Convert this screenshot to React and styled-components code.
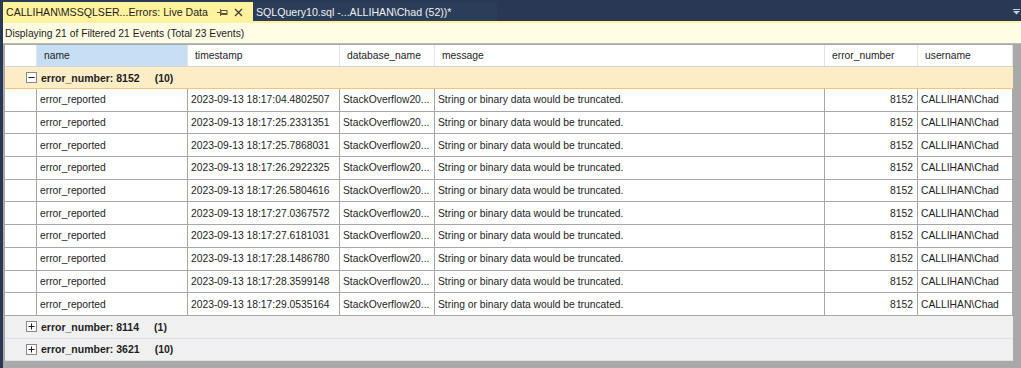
import React from "react";
import styled, { createGlobalStyle } from "styled-components";

const GlobalStyle = createGlobalStyle`
  html, body {
    margin: 0;
    padding: 0;
    background: #293955;
  }
  body {
    font-family: "Liberation Sans", Arial, sans-serif;
  }
`;

const COLUMNS = "32px 151px 152px 95px 390px 93px 95px";

const Window = styled.div`
  width: 1021px;
  height: 368px;
  background: #293955;
  padding-left: 3px;
  box-sizing: border-box;
  display: flex;
  flex-direction: column;
  overflow: hidden;
`;

const TabStrip = styled.div`
  height: 21px;
  display: flex;
  align-items: flex-end;
  position: relative;
`;

const Tab = styled.div`
  height: 19px;
  box-sizing: border-box;
  display: flex;
  align-items: center;
  gap: 6px;
  padding: 0 6px 0 3px;
  font-size: 10.6px;
  white-space: nowrap;
  color: ${(p) => (p.$active ? "#1e1e1e" : "#f1f1f1")};
  background: ${(p) => (p.$active ? "#fff29d" : "#2c3d5a")};
  width: ${(p) => p.$width}px;
`;

const TabLabel = styled.span`
  flex: 1;
`;

const TabIcons = styled.span`
  display: flex;
  align-items: center;
  gap: 6px;
  padding: 1px 4px 0 0;
`;

const StripMenu = styled.svg`
  position: absolute;
  right: 1px;
  top: 9px;
`;

const TabRule = styled.div`
  height: 2px;
  background: #fff29d;
`;

const InfoBar = styled.div`
  height: 21px;
  box-sizing: border-box;
  background: #fffde3;
  border-bottom: 1px solid #b9b9b9;
  font-size: 10.3px;
  color: #1e1e1e;
  display: flex;
  align-items: center;
  padding-left: 2px;
`;

const GridFrame = styled.div`
  flex: 1;
  background: #a9a9a9;
  padding: 1px 0 0 2px;
`;

const Grid = styled.div`
  width: 1008px;
  font-size: 10.3px;
  color: #1e1e1e;
`;

const HeaderRow = styled.div`
  display: grid;
  grid-template-columns: ${COLUMNS};
  height: 22px;
  box-sizing: border-box;
  background: #ffffff;
  border-bottom: 1px solid #d4d4d4;
`;

const HeaderCell = styled.div`
  display: flex;
  align-items: center;
  padding-left: 7px;
  border-right: 1px solid #e3e3e3;
  background: ${(p) => (p.$selected ? "#c7dff4" : "#ffffff")};
`;

const GroupRow = styled.div`
  height: ${(p) => (p.$expanded ? 22 : 22.7)}px;
  box-sizing: border-box;
  display: flex;
  align-items: center;
  padding-left: 21px;
  gap: 4px;
  font-weight: bold;
  font-size: 10.5px;
  background: ${(p) => (p.$expanded ? "#fdedc6" : "#f0f0f0")};
  border-bottom: 1px solid ${(p) => (p.$expanded ? "#f2c76e" : "#dbe2ea")};
`;

const Count = styled.span`
  margin-left: 11px;
`;

const DataRow = styled.div`
  display: grid;
  grid-template-columns: ${COLUMNS};
  height: 22.7px;
  box-sizing: border-box;
  background: #ffffff;
  border-bottom: 1px solid #a8a8a8;
`;

const RowHeader = styled.div`
  border-right: 1px solid #a8a8a8;
`;

const Cell = styled.div`
  display: flex;
  align-items: center;
  justify-content: ${(p) => (p.$right ? "flex-end" : "flex-start")};
  padding: ${(p) => (p.$right ? "0 4px 0 0" : "0 0 0 3px")};
  border-right: 1px solid #a8a8a8;
  white-space: nowrap;
  overflow: hidden;
`;

const Toggle = ({ open }) => (
  <svg width="11" height="11" viewBox="0 0 11 11">
    <rect x="0.5" y="0.5" width="10" height="10" fill="#ffffff" stroke="#8a8a8a" />
    <line x1="2.5" y1="5.5" x2="8.5" y2="5.5" stroke="#1e1e1e" />
    {!open && <line x1="5.5" y1="2.5" x2="5.5" y2="8.5" stroke="#1e1e1e" />}
  </svg>
);

const PinIcon = () => (
  <svg width="11" height="9" viewBox="0 0 11 9">
    <line x1="0" y1="4.5" x2="3" y2="4.5" stroke="#5b5a3e" />
    <line x1="3.5" y1="1" x2="3.5" y2="8" stroke="#5b5a3e" />
    <rect x="4" y="2.5" width="6" height="4" fill="none" stroke="#5b5a3e" />
    <line x1="4" y1="5.5" x2="10" y2="5.5" stroke="#5b5a3e" />
  </svg>
);

const CloseIcon = () => (
  <svg width="9" height="9" viewBox="0 0 9 9">
    <path d="M1 1 L8 8 M8 1 L1 8" stroke="#3b3b3b" strokeWidth="1.3" />
  </svg>
);

const times = [
  "04.4802507",
  "25.2331351",
  "25.7868031",
  "26.2922325",
  "26.5804616",
  "27.0367572",
  "27.6181031",
  "28.1486780",
  "28.3599148",
  "29.0535164",
];

const headers = ["", "name", "timestamp", "database_name", "message", "error_number", "username"];

export default function App() {
  return (
    <>
      <GlobalStyle />
      <Window>
        <TabStrip>
          <Tab $active $width={250}>
            <TabLabel>CALLIHAN\MSSQLSER...Errors: Live Data</TabLabel>
            <TabIcons>
              <PinIcon />
              <CloseIcon />
            </TabIcons>
          </Tab>
          <Tab $width={244}>
            <TabLabel>SQLQuery10.sql -...ALLIHAN\Chad (52))*</TabLabel>
          </Tab>
          <StripMenu width="7" height="6" viewBox="0 0 7 6">
            <rect x="0" y="0" width="7" height="1" fill="#c5cedb" />
            <path d="M0 2 L7 2 L3.5 5.5 Z" fill="#c5cedb" />
          </StripMenu>
        </TabStrip>
        <TabRule />
        <InfoBar>Displaying 21 of Filtered 21 Events (Total 23 Events)</InfoBar>
        <GridFrame>
          <Grid>
            <HeaderRow>
              {headers.map((h, i) => (
                <HeaderCell key={i} $selected={h === "name"}>
                  {h}
                </HeaderCell>
              ))}
            </HeaderRow>
            <GroupRow $expanded>
              <Toggle open />
              <span>error_number: 8152</span>
              <Count>(10)</Count>
            </GroupRow>
            {times.map((t) => (
              <DataRow key={t}>
                <RowHeader />
                <Cell>error_reported</Cell>
                <Cell>2023-09-13 18:17:{t}</Cell>
                <Cell>StackOverflow20...</Cell>
                <Cell>String or binary data would be truncated.</Cell>
                <Cell $right>8152</Cell>
                <Cell>CALLIHAN\Chad</Cell>
              </DataRow>
            ))}
            <GroupRow>
              <Toggle />
              <span>error_number: 8114</span>
              <Count>(1)</Count>
            </GroupRow>
            <GroupRow>
              <Toggle />
              <span>error_number: 3621</span>
              <Count>(10)</Count>
            </GroupRow>
          </Grid>
        </GridFrame>
      </Window>
    </>
  );
}
